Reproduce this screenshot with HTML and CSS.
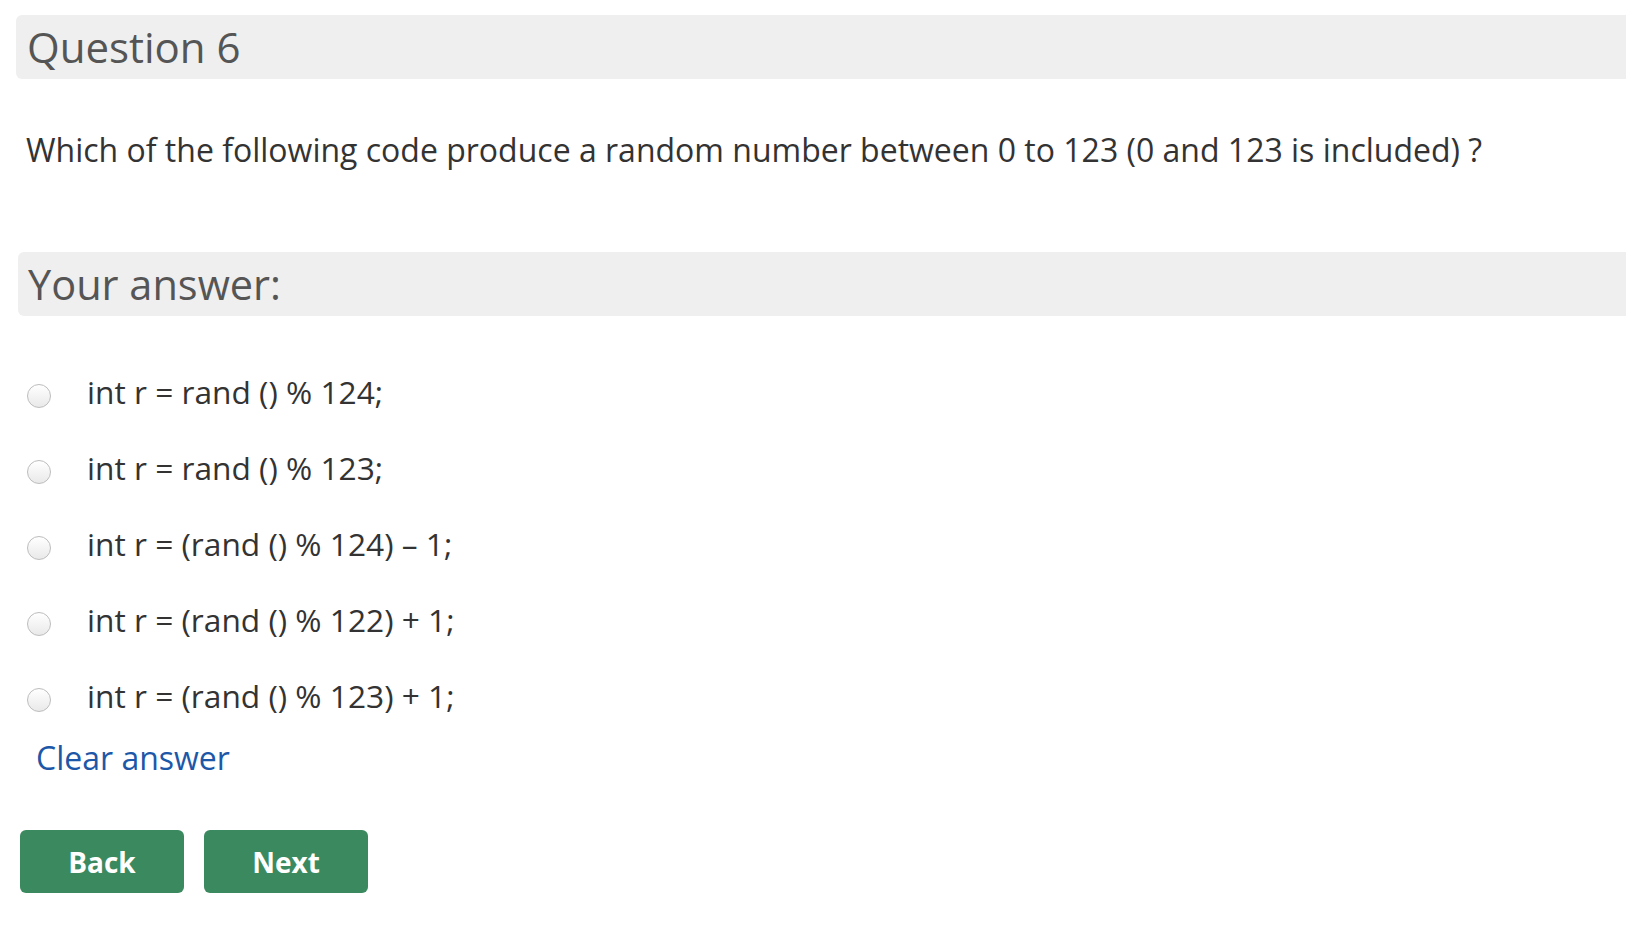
FILE: index.html
```html
<!DOCTYPE html>
<html lang="en">
	<head>
		<meta charset="UTF-8">
		<meta name="viewport" content="width=device-width, initial-scale=1">
		<link rel="stylesheet" href="styles.css">
	</head>

	<body>
		<div class="quiz">
			<div class="quizHeader headerQuestion">Question 6</div>

			<div class="questionText">Which of the following code produce a random number between 0 to 123 (0 and 123 is included) ?</div>

			<div class="quizHeader headerAnswer">Your answer:</div>

			<div class="answers">
				<label class="answer"><input type="radio" name="q6" class="radio"><span>int r = rand () % 124;</span></label>
				<label class="answer"><input type="radio" name="q6" class="radio"><span>int r = rand () % 123;</span></label>
				<label class="answer"><input type="radio" name="q6" class="radio"><span>int r = (rand () % 124) – 1;</span></label>
				<label class="answer"><input type="radio" name="q6" class="radio"><span>int r = (rand () % 122) + 1;</span></label>
				<label class="answer"><input type="radio" name="q6" class="radio"><span>int r = (rand () % 123) + 1;</span></label>
			</div>

			<a href="#" class="clearAnswer">Clear answer</a>

			<div class="buttons">
				<button class="buttonNav">Back</button>
				<button class="buttonNav">Next</button>
			</div>
		</div>
	</body>
</html>
```

FILE: styles.css
```css
body {
	margin: 0;
	font-family: "Open Sans", "Liberation Sans", sans-serif;
	color: #333;
	background: #fff;
}

.quiz {
	padding-top: 15px;
	padding-left: 16px;
	overflow: hidden;
}

/*---------------------------HEADERS---------------------------*/
.quizHeader {
	background-color: #efefef;
	color: #555;
	font-size: 42px;
	height: 64px;
	line-height: 64px;
	padding-left: 11px;
	border-radius: 6px 0 0 6px;
}

.headerAnswer {
	margin-left: 2px;
	margin-top: 82px;
	font-size: 41.5px;
	padding-left: 10px;
}

.questionText {
	font-size: 32px;
	line-height: 40px;
	margin-top: 51px;
	padding-left: 10px;
}

/*---------------------------ANSWERS---------------------------*/
.answers {
	margin-top: 38px;
}

.answer {
	display: flex;
	align-items: center;
	height: 76px;
	font-size: 31.7px;
	line-height: 76px;
}

.radio {
	-webkit-appearance: none;
	appearance: none;
	width: 24px;
	height: 24px;
	margin: 8px 36px 0 11px;
	border: 1px solid #bdbdbd;
	border-radius: 50%;
	background: linear-gradient(#ffffff, #e9e9e9);
	box-sizing: border-box;
}

.clearAnswer {
	display: block;
	width: max-content;
	margin-top: 4px;
	margin-left: 20px;
	font-size: 32px;
	line-height: 40px;
	color: #1d58a8;
	text-decoration: none;
}

/*---------------------------BUTTONS---------------------------*/
.buttons {
	display: flex;
	gap: 20px;
	margin-top: 52px;
	margin-left: 4px;
}

.buttonNav {
	width: 164px;
	height: 63px;
	background-color: #3b8a5f;
	border: none;
	border-radius: 6px;
	color: #fff;
	font-family: "Open Sans", "Liberation Sans", sans-serif;
	font-weight: bold;
	font-size: 28px;
	cursor: pointer;
}
```
